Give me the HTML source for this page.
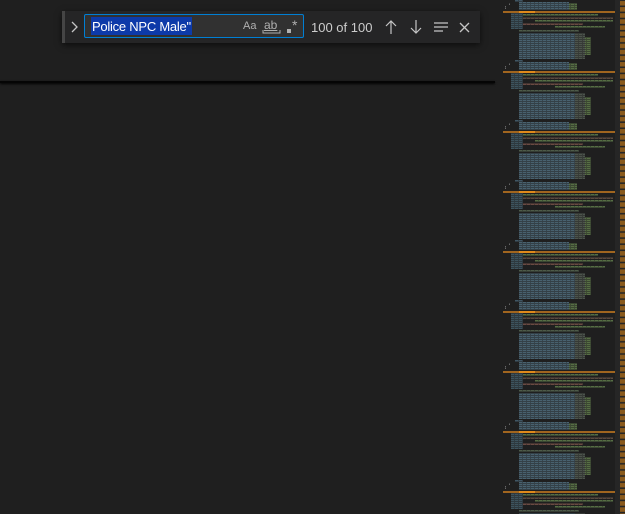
<!DOCTYPE html>
<html><head><meta charset="utf-8"><style>
body{margin:0;width:625px;height:514px;background:#1f1f1f;overflow:hidden;position:relative;font-family:"Liberation Sans",sans-serif}
.line{position:absolute;left:0;top:81px;width:495px;height:2px;background:#050505;box-shadow:0 1px 2px #000}
.find{position:absolute;left:62px;top:11px;width:418px;height:32px;background:#252526;border-left:3px solid #454545;box-shadow:0 2px 6px rgba(0,0,0,.6);box-sizing:border-box}
.inp{position:absolute;left:84px;top:14px;width:220px;height:24px;border:1px solid #007fd4;background:#313131;box-sizing:border-box;border-radius:2px}
.sel{position:absolute;left:91px;top:17px;height:18px;background:#0d3aa9;color:#fff;font-size:13px;letter-spacing:-0.25px;line-height:19px;padding:0 1px;white-space:nowrap}
.t{position:absolute;color:#c5c5c5;font-size:13px}
</style></head><body>
<div class="line"></div>
<div class="find"></div>
<svg style="position:absolute;left:70px;top:21px" width="10" height="12"><path d="M2 1l5 5-5 5" stroke="#c5c5c5" fill="none" stroke-width="1.3"/></svg>
<div class="inp"></div>
<div class="sel">Police NPC Male"</div>
<div class="t" style="left:243px;top:20px;font-size:11px;color:#b0b0b0">Aa</div>
<div class="t" style="left:264px;top:18px;font-size:12px;color:#b0b0b0;text-decoration:underline">ab</div>
<svg style="position:absolute;left:262px;top:29px" width="20" height="6"><path d="M1 1v3h17v-3" stroke="#b0b0b0" fill="none"/></svg>
<div style="position:absolute;left:287px;top:29px;width:4px;height:4px;background:#b0b0b0"></div>
<div class="t" style="left:292px;top:17px;font-size:14px;color:#b0b0b0">*</div>
<div class="t" style="left:311px;top:20px;color:#cccccc">100 of 100</div>
<svg style="position:absolute;left:383px;top:19px" width="92" height="16">
<path d="M8 2v13M3 7l5-5 5 5" stroke="#c5c5c5" fill="none" stroke-width="1.2"/>
<path d="M33 1v13M28 9l5 5 5-5" stroke="#c5c5c5" fill="none" stroke-width="1.2"/>
<path d="M51 4h14M51 8h14M51 12h9" stroke="#c5c5c5" fill="none" stroke-width="1.2"/>
<path d="M77 4l9 9M86 4l-9 9" stroke="#c5c5c5" fill="none" stroke-width="1.3"/>
</svg>
<svg style="position:absolute;left:495px;top:0" width="130" height="514">
<defs>
<pattern id="p" x="0" y="11" width="130" height="60" patternUnits="userSpaceOnUse">
<rect x="16" y="2" width="12" height="16" fill="#4a6a7a" opacity=".7"/>
<rect x="28" y="3" width="75" height="2" fill="#566e44"/>
<rect x="28" y="6" width="90" height="2" fill="#5a4a40"/>
<rect x="40" y="9" width="78" height="2" fill="#566e44"/>
<rect x="28" y="12" width="60" height="2" fill="#6a4a42"/>
<rect x="60" y="15" width="50" height="2" fill="#566e44"/>
<rect x="24" y="19" width="60" height="2" fill="#4d5a48"/>
<rect x="24" y="22" width="56" height="26" fill="#5a7d92" opacity=".7"/>
<rect x="80" y="22" width="10" height="26" fill="#7a8a7a" opacity=".5"/>
<rect x="90" y="26" width="6" height="18" fill="#566e44"/>
<rect x="20" y="49" width="8" height="2" fill="#4f6e82" opacity=".7"/>
<rect x="24" y="51" width="50" height="8" fill="#5a7d92" opacity=".7"/>
<rect x="74" y="52" width="8" height="7" fill="#566e44"/>
<rect x="10" y="55" width="1" height="3" fill="#666"/>
<rect x="14" y="52" width="1" height="2" fill="#666"/>
</pattern>
<pattern id="g" x="0" y="0" width="4" height="2" patternUnits="userSpaceOnUse">
<rect x="0" y="1" width="4" height="1" fill="#1f1f1f" opacity=".5"/>
<rect x="3" y="0" width="1" height="1" fill="#1f1f1f" opacity=".4"/>
</pattern>
<pattern id="o" x="0" y="11" width="130" height="60" patternUnits="userSpaceOnUse">
<rect x="8" y="0" width="112" height="2" fill="#a0651f"/>
<rect x="24" y="0" width="16" height="2" fill="#e08a1a"/>
</pattern>
<pattern id="s" x="0" y="0" width="10" height="6.1" patternUnits="userSpaceOnUse">
<rect x="5" y="1" width="5" height="4.5" fill="#8a5a1c"/>
</pattern>
</defs>
<rect x="0" y="0" width="120" height="514" fill="url(#p)"/>
<rect x="0" y="0" width="120" height="514" fill="url(#g)"/>
<rect x="0" y="0" width="120" height="514" fill="url(#o)"/>
<rect x="120" y="0" width="10" height="514" fill="#262626"/>
<rect x="120" y="0" width="10" height="514" fill="url(#s)"/>
</svg>
</body></html>
